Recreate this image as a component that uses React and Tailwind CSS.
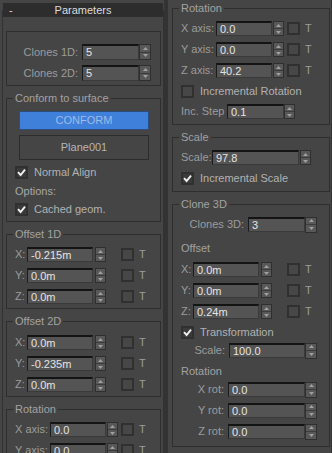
import React from "react";

const BG = "bg-[#454545]";

function Spinner({ big }) {
  return (
    <div
      className={`${big ? "w-[12px] h-[16px]" : "w-[11px] h-[15px]"} shrink-0 flex flex-col border border-[#2f2f2f] bg-[#585858]`}
    >
      <div className="flex-1 flex items-center justify-center border-b border-[#3c3c3c]">
        <svg width="5" height="3" viewBox="0 0 5 3">
          <path d="M0 3 L2.5 0 L5 3Z" fill="#a0a0a0" />
        </svg>
      </div>
      <div className="flex-1 flex items-center justify-center">
        <svg width="5" height="3" viewBox="0 0 5 3">
          <path d="M0 0 L2.5 3 L5 0Z" fill="#a0a0a0" />
        </svg>
      </div>
    </div>
  );
}

function Field({ value, w, big }) {
  return (
    <div
      className={`${w} ${big ? "h-[16px]" : "h-[15px]"} shrink-0 flex items-center pl-[3px] bg-[#545454] border border-[#3a3a3a] border-t-2 border-t-[#141414] border-l-[#1c1c1c] text-[#e4e4e4] leading-none overflow-hidden whitespace-nowrap`}
    >
      {value}
    </div>
  );
}

function Check({ checked }) {
  return (
    <div
      className={`w-[13px] h-[13px] shrink-0 flex items-center justify-center border-2 border-[#303030] ${checked ? "bg-[#3a3a3a]" : "bg-[#474747]"}`}
    >
      {checked && (
        <svg width="9" height="9" viewBox="0 0 9 9">
          <path d="M1 4.2 L3.6 7 L8 1.6" stroke="#f0f0f0" strokeWidth="1.9" fill="none" />
        </svg>
      )}
    </div>
  );
}

function Group({ label, className, children }) {
  return (
    <div className={`relative border border-[#2e2e2e] ${className}`}>
      {label && (
        <span className={`absolute -top-[7px] left-[6px] px-[2px] ${BG} leading-[12px] text-[#a2a2a2] whitespace-nowrap`}>
          {label}
        </span>
      )}
      {children}
    </div>
  );
}

function CheckRow({ checked, label, className = "" }) {
  return (
    <div className={`flex items-center h-[13px] ${className}`}>
      <Check checked={checked} />
      <span className="ml-[6px] text-[#b2b2b2] leading-none whitespace-nowrap">{label}</span>
    </div>
  );
}

function OffsetRow({ label, value, className = "" }) {
  return (
    <div className={`flex items-center h-[15px] ${className}`}>
      <span className="w-[12px] text-[#9c9c9c] leading-none">{label}</span>
      <Field value={value} w="w-[66px]" />
      <div className="ml-[2px]">
        <Spinner />
      </div>
      <div className="ml-[15px]">
        <Check />
      </div>
      <span className="ml-[5px] text-[#9c9c9c] leading-none">T</span>
    </div>
  );
}

function AxisRow({ label, value, className = "" }) {
  return (
    <div className={`flex items-center h-[15px] ${className}`}>
      <span className="w-[35px] text-[#9c9c9c] leading-none whitespace-nowrap">{label}</span>
      <Field value={value} w="w-[56px]" />
      <div className="ml-[1px]">
        <Spinner />
      </div>
      <div className="ml-[3px]">
        <Check />
      </div>
      <span className="ml-[5px] text-[#9c9c9c] leading-none">T</span>
    </div>
  );
}

function RightRow({ label, value, w, big, pr, className = "" }) {
  return (
    <div className={`flex items-center justify-end ${big ? "h-[16px]" : "h-[15px]"} ${pr} ${className}`}>
      <span className="mr-[4px] text-[#9c9c9c] leading-none whitespace-nowrap">{label}</span>
      <Field value={value} w={w} big={big} />
      <Spinner big />
    </div>
  );
}

function LeftColumn() {
  return (
    <div className="w-[164px] shrink-0 flex flex-col">
      <div className="ml-[2px] w-[162px] mt-[10px] flex-1 border-x border-[#323232] flex flex-col">
        <div className="-mt-[7px] h-[14px] bg-[#2d2d2d] flex items-center text-[#dcdcdc]">
          <span className="w-[20px] pl-[6px] leading-none">-</span>
          <span className="flex-1 text-center leading-none">Parameters</span>
          <span className="w-[20px]" />
        </div>

        <div className="pl-[3px] flex flex-col">
          <Group className="mt-[14px] w-[155px] pt-[12px] pb-[4px]">
            <RightRow label="Clones 1D:" value="5" w="w-[57px]" big pr="pr-[9px]" />
            <RightRow label="Clones 2D:" value="5" w="w-[57px]" big pr="pr-[9px]" className="mt-[5px]" />
          </Group>

          <Group label="Conform to surface" className="mt-[12px] w-[155px] pt-[12px] pb-[5px]">
            <div className="ml-[12px] w-[130px] h-[19px] bg-[#3f80db] border border-[#2b4d80] flex items-center justify-center text-[#9dbbe8] leading-none">
              CONFORM
            </div>
            <div className="mt-[5px] ml-[12px] w-[130px] h-[25px] border border-[#2c2c2c] flex items-center justify-center text-[#b4b4b4] leading-none">
              Plane001
            </div>
            <CheckRow checked label="Normal Align" className="mt-[6px] ml-[8px]" />
            <div className="mt-[6px] ml-[8px] h-[12px] leading-[12px] text-[#a8a8a8]">Options:</div>
            <CheckRow checked label="Cached geom." className="mt-[6px] ml-[8px]" />
          </Group>

          <Group label="Offset 1D" className="mt-[12px] w-[155px] pt-[12px] pb-[4px] pl-[8px]">
            <OffsetRow label="X:" value="-0.215m" />
            <OffsetRow label="Y:" value="0.0m" className="mt-[6px]" />
            <OffsetRow label="Z:" value="0.0m" className="mt-[6px]" />
          </Group>

          <Group label="Offset 2D" className="mt-[12px] w-[155px] pt-[13px] pb-[4px] pl-[8px]">
            <OffsetRow label="X:" value="0.0m" />
            <OffsetRow label="Y:" value="-0.235m" className="mt-[6px]" />
            <OffsetRow label="Z:" value="0.0m" className="mt-[6px]" />
          </Group>

          <Group label="Rotation" className="mt-[12px] w-[155px] pt-[12px] pb-[6px] pl-[8px]">
            <AxisRow label="X axis:" value="0.0" />
            <AxisRow label="Y axis:" value="0.0" className="mt-[6px]" />
            <AxisRow label="Z axis:" value="0.0" className="mt-[6px]" />
          </Group>
        </div>
      </div>
    </div>
  );
}

function RightColumn() {
  return (
    <div className="w-[164px] shrink-0 flex flex-col border-r border-[#333] pl-[4px]">
      <Group label="Rotation" className="mt-[8px] w-[158px] pt-[12px] pb-[5px] pl-[8px]">
        <AxisRow label="X axis:" value="0.0" />
        <AxisRow label="Y axis:" value="0.0" className="mt-[6px]" />
        <AxisRow label="Z axis:" value="40.2" className="mt-[6px]" />
        <CheckRow label="Incremental Rotation" className="mt-[7px]" />
        <div className="mt-[6px] flex items-center h-[15px]">
          <span className="w-[46px] text-[#9c9c9c] leading-none whitespace-nowrap">Inc. Step</span>
          <Field value="0.1" w="w-[57px]" />
          <Spinner />
        </div>
      </Group>

      <Group label="Scale" className="mt-[12px] w-[158px] pt-[12px] pb-[6px] pl-[8px]">
        <div className="flex items-center h-[15px]">
          <span className="w-[31px] text-[#9c9c9c] leading-none">Scale:</span>
          <Field value="97.8" w="w-[87px]" />
          <div className="ml-[1px]">
            <Spinner />
          </div>
        </div>
        <CheckRow checked label="Incremental Scale" className="mt-[7px]" />
      </Group>

      <Group label="Clone 3D" className="mt-[12px] w-[158px] pt-[12px] pb-[7px]">
        <RightRow label="Clones 3D:" value="3" w="w-[57px]" pr="pr-[12px]" />
        <div className="mt-[10px] pl-[8px] h-[12px] leading-[12px] text-[#a2a2a2]">Offset</div>
        <div className="pl-[8px] mt-[8px]">
          <OffsetRow label="X:" value="0.0m" />
          <OffsetRow label="Y:" value="0.0m" className="mt-[6px]" />
          <OffsetRow label="Z:" value="0.24m" className="mt-[6px]" />
          <CheckRow checked label="Transformation" className="mt-[7px]" />
        </div>
        <RightRow label="Scale:" value="100.0" w="w-[76px]" pr="pr-[12px]" className="mt-[4px]" />
        <div className="mt-[7px] pl-[8px] h-[12px] leading-[12px] text-[#a2a2a2]">Rotation</div>
        <RightRow label="X rot:" value="0.0" w="w-[77px]" pr="pr-[12px]" className="mt-[5px]" />
        <RightRow label="Y rot:" value="0.0" w="w-[77px]" pr="pr-[12px]" className="mt-[6px]" />
        <RightRow label="Z rot:" value="0.0" w="w-[77px]" pr="pr-[12px]" className="mt-[6px]" />
      </Group>
    </div>
  );
}

export default function App() {
  return (
    <div
      className={`w-[332px] h-[453px] overflow-hidden flex ${BG} text-[11px] font-['Liberation_Sans',Arial,sans-serif] select-none`}
    >
      <LeftColumn />
      <div className="w-[4px] shrink-0 bg-[#333333]" />
      <RightColumn />
    </div>
  );
}
